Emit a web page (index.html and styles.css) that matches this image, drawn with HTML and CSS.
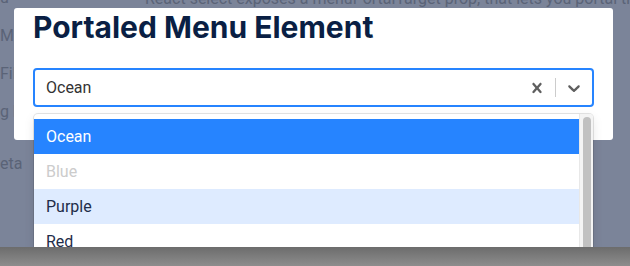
FILE: index.html
```html
<!DOCTYPE html>
<html>
<head>
<meta charset="utf-8">
<link rel="stylesheet" href="styles.css">
</head>
<body>
<div class="page">
  <div class="nav">
    <div class="nav-item">u</div>
    <div class="nav-item">Multi</div>
    <div class="nav-item">Filters</div>
    <div class="nav-item">g by</div>
    <div class="nav-item nav-gap">eta</div>
  </div>
  <div class="content">
    <p class="lead">React select exposes a menuPortalTarget prop, that lets you portal the select menu.</p>
  </div>
</div>
<div class="overlay">
  <div class="modal">
    <h1 class="title">Portaled Menu Element</h1>
    <div class="control">
      <div class="value">Ocean</div>
      <div class="indicators">
        <div class="indicator">
          <svg width="20" height="20" viewBox="0 0 20 20"><path d="M14.348 14.849c-0.469 0.469-1.229 0.469-1.697 0l-2.651-3.030-2.651 3.029c-0.469 0.469-1.229 0.469-1.697 0-0.469-0.469-0.469-1.229 0-1.697l2.758-3.150-2.759-3.152c-0.469-0.469-0.469-1.228 0-1.697s1.228-0.469 1.697 0l2.652 3.031 2.651-3.031c0.469-0.469 1.228-0.469 1.697 0s0.469 1.229 0 1.697l-2.758 3.152 2.758 3.150c0.469 0.469 0.469 1.229 0 1.698z"/></svg>
        </div>
        <span class="separator"></span>
        <div class="indicator">
          <svg width="20" height="20" viewBox="0 0 20 20"><path d="M4.516 7.548c0.436-0.446 1.043-0.481 1.576 0l3.908 3.747 3.908-3.747c0.533-0.481 1.141-0.446 1.574 0 0.436 0.445 0.408 1.197 0 1.615-0.406 0.418-4.695 4.502-4.695 4.502-0.217 0.223-0.502 0.335-0.787 0.335s-0.570-0.112-0.789-0.335c0 0-4.287-4.084-4.695-4.502s-0.436-1.170 0-1.615z"/></svg>
        </div>
      </div>
    </div>
  </div>
</div>
<div class="menu">
  <div class="menu-list">
    <div class="option selected">Ocean</div>
    <div class="option disabled">Blue</div>
    <div class="option focused">Purple</div>
    <div class="option">Red</div>
  </div>
  <div class="scrollbar"><div class="thumb"></div></div>
</div>
<div class="bottombar"></div>
</body>
</html>
```
FILE: styles.css
```css
html, body {
  margin: 0;
  padding: 0;
  width: 630px;
  height: 266px;
  overflow: hidden;
  font-family: Roboto, "Liberation Sans", sans-serif;
}
body {
  position: relative;
  background: #7b8499;
}
.page {
  display: flex;
  color: #5a6377;
  font-size: 16px;
}
.nav {
  width: 145px;
  margin-top: -14px;
  flex: none;
}
.nav-item {
  height: 38px;
  line-height: 24px;
  white-space: nowrap;
}
.nav-gap {
  margin-top: 14px;
}
.content {
  margin-top: -13px;
}
.lead {
  margin: 0;
  white-space: nowrap;
  font-size: 16px;
  line-height: 24px;
}
.overlay {
  position: absolute;
  left: 14px;
  top: 8px;
}
.modal {
  width: 599px;
  height: 132px;
  box-sizing: border-box;
  padding: 0 19px;
  background: #fff;
  border-radius: 3px;
}
.title {
  margin: 0;
  padding-top: 2px;
  font-family: Inter, Roboto, sans-serif;
  font-size: 30px;
  line-height: 35px;
  font-weight: 700;
  color: #0a1f44;
}
.control {
  margin-top: 23px;
  height: 39px;
  box-sizing: border-box;
  border: 2px solid #2684ff;
  border-radius: 4px;
  display: flex;
  align-items: center;
  justify-content: space-between;
}
.value {
  padding-left: 11px;
  font-size: 16px;
  color: #333;
}
.indicators {
  display: flex;
  align-items: center;
  align-self: stretch;
}
.indicator {
  width: 36px;
  display: flex;
  justify-content: center;
  align-items: center;
}
.indicator svg {
  fill: #5f5f5f;
}
.separator {
  width: 1px;
  height: 19px;
  background: #ccc;
}
.menu {
  position: absolute;
  left: 34px;
  top: 114px;
  width: 559px;
  height: 133px;
  background: #fff;
  border-radius: 4px 4px 0 0;
  box-shadow: 0 0 0 1px rgba(0,0,0,0.1), 0 4px 11px rgba(0,0,0,0.1);
  display: flex;
  overflow: hidden;
}
.menu-list {
  flex: 1;
  padding-top: 5px;
}
.option {
  height: 35px;
  flex: none;
  box-sizing: border-box;
  padding: 0 12px;
  display: flex;
  align-items: center;
  font-size: 16px;
  color: #1f2d4a;
}
.option.selected {
  background: #2684ff;
  color: #fff;
}
.option.disabled {
  color: #ccc;
}
.option.focused {
  background: #deebff;
}
.scrollbar {
  width: 14px;
  flex: none;
  background: #f4f4f4;
  border-left: 1px solid #e8e8e8;
  box-sizing: border-box;
  padding: 3px 2px 0 3px;
}
.thumb {
  height: 140px;
  background: #c1c1c1;
  border-radius: 4px;
}
.bottombar {
  position: absolute;
  left: 0;
  top: 247px;
  width: 630px;
  height: 19px;
  background: linear-gradient(#6c6c6c, #8d8d8d);
}
```
